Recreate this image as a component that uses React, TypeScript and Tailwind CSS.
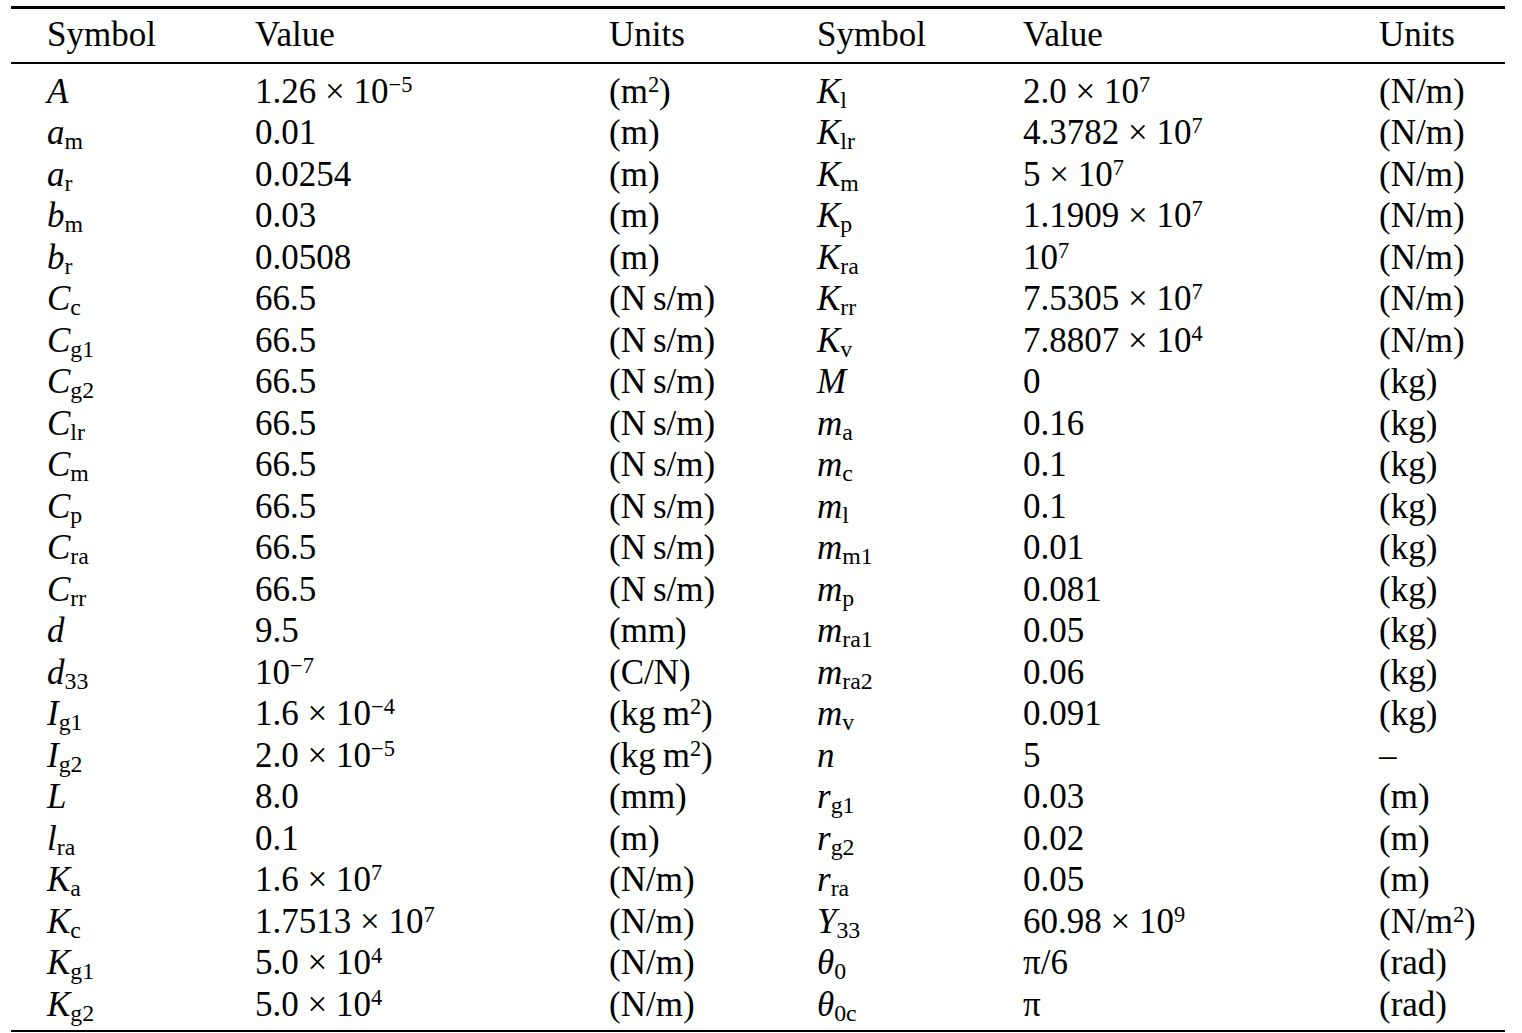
import type { FC, ReactNode } from "react";

type Row = {
  sym: [string, string?];
  value: [string, string?];
  unit: ReactNode;
};

const Sub: FC<{ children: ReactNode }> = ({ children }) => (
  <span className="relative top-[5px] not-italic text-[0.68em] leading-none">
    {children}
  </span>
);

const Sup: FC<{ children: ReactNode }> = ({ children }) => (
  <span className="relative top-[-11px] text-[0.64em] leading-none">
    {children}
  </span>
);

const m2 = (
  <>
    m<Sup>2</Sup>
  </>
);

const U = {
  m2: <>({m2})</>,
  m: "(m)",
  mm: "(mm)",
  nsm: "(N\u2009s/m)",
  nm: "(N/m)",
  cn: "(C/N)",
  kgm2: <>(kg{"\u2009"}{m2})</>,
  kg: "(kg)",
  nm2: <>(N/{m2})</>,
  rad: "(rad)",
  none: "–",
};

const left: Row[] = [
  { sym: ["A"], value: ["1.26 × 10", "−5"], unit: U.m2 },
  { sym: ["a", "m"], value: ["0.01"], unit: U.m },
  { sym: ["a", "r"], value: ["0.0254"], unit: U.m },
  { sym: ["b", "m"], value: ["0.03"], unit: U.m },
  { sym: ["b", "r"], value: ["0.0508"], unit: U.m },
  { sym: ["C", "c"], value: ["66.5"], unit: U.nsm },
  { sym: ["C", "g1"], value: ["66.5"], unit: U.nsm },
  { sym: ["C", "g2"], value: ["66.5"], unit: U.nsm },
  { sym: ["C", "lr"], value: ["66.5"], unit: U.nsm },
  { sym: ["C", "m"], value: ["66.5"], unit: U.nsm },
  { sym: ["C", "p"], value: ["66.5"], unit: U.nsm },
  { sym: ["C", "ra"], value: ["66.5"], unit: U.nsm },
  { sym: ["C", "rr"], value: ["66.5"], unit: U.nsm },
  { sym: ["d"], value: ["9.5"], unit: U.mm },
  { sym: ["d", "33"], value: ["10", "−7"], unit: U.cn },
  { sym: ["I", "g1"], value: ["1.6 × 10", "−4"], unit: U.kgm2 },
  { sym: ["I", "g2"], value: ["2.0 × 10", "−5"], unit: U.kgm2 },
  { sym: ["L"], value: ["8.0"], unit: U.mm },
  { sym: ["l", "ra"], value: ["0.1"], unit: U.m },
  { sym: ["K", "a"], value: ["1.6 × 10", "7"], unit: U.nm },
  { sym: ["K", "c"], value: ["1.7513 × 10", "7"], unit: U.nm },
  { sym: ["K", "g1"], value: ["5.0 × 10", "4"], unit: U.nm },
  { sym: ["K", "g2"], value: ["5.0 × 10", "4"], unit: U.nm },
];

const right: Row[] = [
  { sym: ["K", "l"], value: ["2.0 × 10", "7"], unit: U.nm },
  { sym: ["K", "lr"], value: ["4.3782 × 10", "7"], unit: U.nm },
  { sym: ["K", "m"], value: ["5 × 10", "7"], unit: U.nm },
  { sym: ["K", "p"], value: ["1.1909 × 10", "7"], unit: U.nm },
  { sym: ["K", "ra"], value: ["10", "7"], unit: U.nm },
  { sym: ["K", "rr"], value: ["7.5305 × 10", "7"], unit: U.nm },
  { sym: ["K", "v"], value: ["7.8807 × 10", "4"], unit: U.nm },
  { sym: ["M"], value: ["0"], unit: U.kg },
  { sym: ["m", "a"], value: ["0.16"], unit: U.kg },
  { sym: ["m", "c"], value: ["0.1"], unit: U.kg },
  { sym: ["m", "l"], value: ["0.1"], unit: U.kg },
  { sym: ["m", "m1"], value: ["0.01"], unit: U.kg },
  { sym: ["m", "p"], value: ["0.081"], unit: U.kg },
  { sym: ["m", "ra1"], value: ["0.05"], unit: U.kg },
  { sym: ["m", "ra2"], value: ["0.06"], unit: U.kg },
  { sym: ["m", "v"], value: ["0.091"], unit: U.kg },
  { sym: ["n"], value: ["5"], unit: U.none },
  { sym: ["r", "g1"], value: ["0.03"], unit: U.m },
  { sym: ["r", "g2"], value: ["0.02"], unit: U.m },
  { sym: ["r", "ra"], value: ["0.05"], unit: U.m },
  { sym: ["Y", "33"], value: ["60.98 × 10", "9"], unit: U.nm2 },
  { sym: ["θ", "0"], value: ["π/6"], unit: U.rad },
  { sym: ["θ", "0c"], value: ["π"], unit: U.rad },
];

const Symbol: FC<{ s: Row["sym"] }> = ({ s }) => (
  <span className="italic">
    {s[0]}
    {s[1] && <Sub>{s[1]}</Sub>}
  </span>
);

const Value: FC<{ v: Row["value"] }> = ({ v }) => (
  <span>
    {v[0]}
    {v[1] && <Sup>{v[1]}</Sup>}
  </span>
);

const cols = "grid grid-cols-[244px_354px_208px_206px_356px_126px]";

export default function App() {
  return (
    <main
      className="min-h-[1033px] bg-white pt-[6px] pl-[11px] text-black"
      style={{ fontFamily: '"Liberation Serif", "Times New Roman", serif' }}
    >
      <div className="w-[1494px] text-[35px] leading-[41.5px]">
        {/* header */}
        <div className="border-t-[3px] border-b-2 border-black pt-[5px] pb-[6px]">
          <div className={cols}>
            <div className="pl-[36px]">Symbol</div>
            <div>Value</div>
            <div>Units</div>
            <div>Symbol</div>
            <div>Value</div>
            <div>Units</div>
          </div>
        </div>

        {/* body */}
        <div className="border-b-2 border-black pt-[7px] pb-[5px]">
          {left.map((l, i) => {
            const r = right[i];
            return (
              <div key={i} className={cols}>
                <div className="pl-[36px]">
                  <Symbol s={l.sym} />
                </div>
                <div>
                  <Value v={l.value} />
                </div>
                <div>{l.unit}</div>
                <div>
                  <Symbol s={r.sym} />
                </div>
                <div>
                  <Value v={r.value} />
                </div>
                <div>{r.unit}</div>
              </div>
            );
          })}
        </div>
      </div>
    </main>
  );
}
